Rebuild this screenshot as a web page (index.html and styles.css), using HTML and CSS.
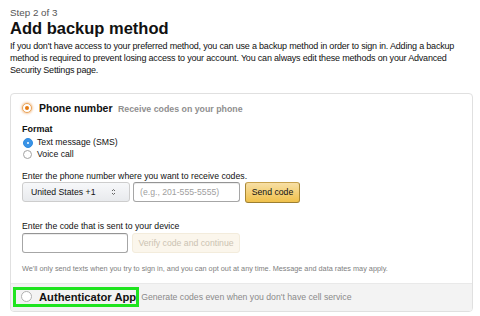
FILE: index.html
```html
<!DOCTYPE html>
<html lang="en">
<head>
    <meta charset="UTF-8">
    <meta name="viewport" content="width=device-width, initial-scale=1.0">
    <title>Add backup method</title>
    <link rel="stylesheet" href="styles.css">
</head>
<body>
    <div class="page">
        <div class="step">Step 2 of 3</div>
        <h1>Add backup method</h1>
        <p class="intro">If you don't have access to your preferred method, you can use a backup method in order to sign in. Adding a backup method is required to prevent losing access to your account. You can always edit these methods on your Advanced Security Settings page.</p>

        <div class="card">
            <div class="option">
                <div class="option-head">
                    <span class="radio radio-orange"></span>
                    <span><span class="option-title">Phone number</span> <span class="option-sub">Receive codes on your phone</span></span>
                </div>

                <div class="format">
                    <div class="label-bold">Format</div>
                    <div class="choice first"><span class="radio radio-blue"></span>Text message (SMS)</div>
                    <div class="choice"><span class="radio"></span>Voice call</div>
                </div>

                <div class="field-label">Enter the phone number where you want to receive codes.</div>
                <div class="row">
                    <div class="select">
                        <span>United States +1</span>
                        <svg class="arrows" width="5" height="8" viewBox="0 0 5 8">
                            <path d="M1 3 L2.5 1.5 L4 3 M1 5 L2.5 6.5 L4 5" fill="none" stroke="#666" stroke-width="1"/>
                        </svg>
                    </div>
                    <div class="input placeholder">(e.g., 201-555-5555)</div>
                    <div class="btn btn-primary">Send code</div>
                </div>

                <div class="field-label code-label">Enter the code that is sent to your device</div>
                <div class="row code-row">
                    <div class="input code-input"></div>
                    <div class="btn btn-disabled">Verify code and continue</div>
                </div>

                <div class="note">We'll only send texts when you try to sign in, and you can opt out at any time. Message and data rates may apply.</div>
            </div>

            <div class="option-alt">
                <div class="highlight">
                    <span class="radio radio-big"></span>
                    <span class="alt-title">Authenticator App</span>
                </div>
                <span class="alt-sub">Generate codes even when you don't have cell service</span>
            </div>
        </div>
    </div>
</body>
</html>
```

FILE: styles.css
```css
body {
    margin: 0;
    background-color: #fff;
    font-family: 'Liberation Sans', Arial, sans-serif;
    color: #111;
}
.page {
    padding: 7px 7px 0 10px;
}
.step {
    font-size: 9.8px;
    color: #555;
    line-height: 11px;
}
h1 {
    margin: 1px 0 0 0;
    font-size: 16.5px;
    line-height: 18px;
    font-weight: bold;
    color: #111;
}
.intro {
    margin: 4px 0 0 0;
    font-size: 9px;
    letter-spacing: -0.19px;
    line-height: 11.8px;
}
.card {
    margin-top: 17px;
    border: 1px solid #e0e0e0;
    border-radius: 4px;
    overflow: hidden;
}
.option {
    padding: 6px 11px 0 11px;
}
.option-head {
    display: flex;
    align-items: center;
    line-height: 14px;
}
.radio {
    display: inline-block;
    box-sizing: border-box;
    flex: none;
    width: 9px;
    height: 9px;
    border: 1px solid #a3a3a3;
    border-radius: 50%;
    background-color: #fff;
    position: relative;
}
.radio-orange {
    width: 10px;
    height: 10px;
    margin-right: 7px;
    border-color: #e9a45a;
    box-shadow: 0 0 2px 1px rgba(228, 121, 17, 0.35);
}
.radio-orange::after {
    content: "";
    position: absolute;
    left: 2px;
    top: 2px;
    width: 4px;
    height: 4px;
    border-radius: 50%;
    background-color: #e47911;
}
.radio-blue {
    width: 10px;
    height: 10px;
    border-color: #2f8be0;
    background-color: #3a93e6;
}
.radio-blue::after {
    content: "";
    position: absolute;
    left: 3px;
    top: 3px;
    width: 2px;
    height: 2px;
    border-radius: 50%;
    background-color: #fff;
}
.option-title {
    font-size: 10.5px;
    font-weight: bold;
    color: #111;
}
.option-sub {
    margin-left: 1px;
    font-size: 8.8px;
    font-weight: bold;
    color: #8f8f8f;
}
.format {
    margin-top: 7px;
}
.label-bold {
    font-size: 9px;
    font-weight: bold;
    line-height: 12px;
}
.choice {
    display: flex;
    align-items: center;
    font-size: 8.7px;
    line-height: 11.5px;
}
.choice.first {
    margin-top: 2px;
}
.choice .radio {
    margin: 0 5px 0 1px;
}
.choice.first .radio {
    margin: 0 4px 0 1px;
}
.field-label {
    margin-top: 9.5px;
    font-size: 8.7px;
    line-height: 12px;
}
.code-label {
    margin-top: 17px;
}
.row {
    display: flex;
    gap: 3px;
}
.code-row {
    margin-top: 1px;
    gap: 4px;
}
.select {
    box-sizing: border-box;
    display: flex;
    align-items: center;
    justify-content: space-between;
    width: 108px;
    height: 20px;
    border: 1px solid #cdcdcd;
    border-radius: 3px;
    background: linear-gradient(#f7f8fa, #e8eaed);
    font-size: 8.7px;
    padding: 0 13px 0 8px;
}
.input {
    box-sizing: border-box;
    width: 107px;
    height: 20px;
    border: 1px solid #a6a6a6;
    border-top-color: #949494;
    border-radius: 3px;
    box-shadow: inset 0 1px 0 rgba(0, 0, 0, 0.07);
    font-size: 8.7px;
    line-height: 18px;
    padding-left: 6px;
}
.placeholder {
    color: #a0a0a0;
}
.btn {
    box-sizing: border-box;
    height: 21px;
    border-radius: 3px;
    font-size: 8.7px;
    line-height: 19px;
    text-align: center;
}
.btn-primary {
    margin-left: 2px;
    width: 55px;
    border: 1px solid #a88734;
    border-color: #c6a14c #a88734 #9c7e31;
    background: linear-gradient(#f7dfa5, #f0c14b);
    color: #111;
}
.btn-disabled {
    width: 108px;
    height: 20px;
    line-height: 18px;
    border: 1px solid #f3ecdc;
    background-color: #fbf6ec;
    color: #cbc3b2;
}
.code-input {
    width: 106px;
}
.note {
    margin-top: 11.5px;
    padding-bottom: 8.5px;
    font-size: 7.3px;
    color: #808080;
    line-height: 10px;
}
.option-alt {
    display: flex;
    align-items: center;
    gap: 2px;
    background-color: #f3f3f3;
    border-top: 1px solid #e9e9e9;
    padding: 3px 2px 4px 2px;
}
.highlight {
    display: flex;
    align-items: center;
    border: 3px solid #1fe41f;
    padding: 0 0 0 5px;
    height: 14px;
}
.radio-big {
    width: 11px;
    height: 11px;
    margin-right: 7px;
    border-color: #b0b0b0;
}
.alt-title {
    font-size: 11.2px;
    font-weight: bold;
    color: #111;
}
.alt-sub {
    font-size: 8.7px;
    color: #8a8a8a;
}
```
